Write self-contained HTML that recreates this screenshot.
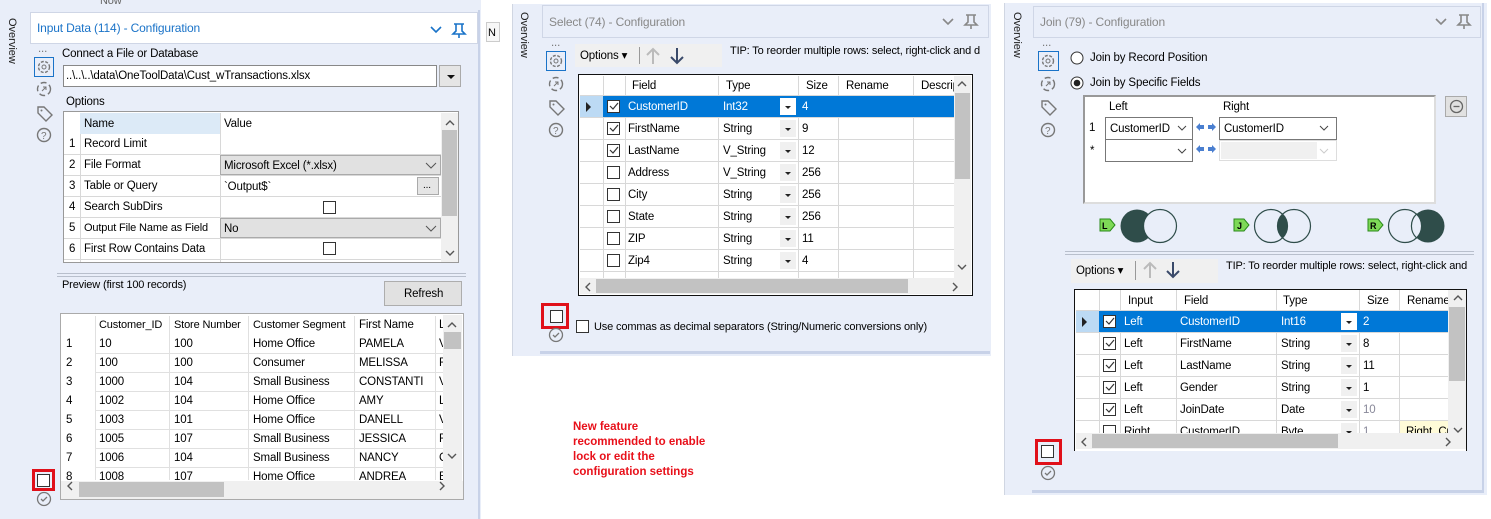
<!DOCTYPE html>
<html><head><meta charset="utf-8">
<style>
*{box-sizing:border-box;margin:0;padding:0}
body{width:1491px;height:519px;background:#fff;position:relative;overflow:hidden;font-family:"Liberation Sans",sans-serif;font-size:11.5px;color:#000}
.a{position:absolute}
.pan{background:#e9eef9}
.hdr{background:#fff;border:1px solid #cfd6e6}
.t{position:absolute;white-space:nowrap;line-height:14px;letter-spacing:-0.15px}
.grid{background:#fff;border:1px solid #a0a0a0}
.hl{position:absolute;height:1px;background:#d8d8d8}
.vl{position:absolute;width:1px;background:#d8d8d8}
.cb{position:absolute;width:13px;height:13px;border:1px solid #333;background:#fff}
.red{position:absolute;border:3px solid #e0101a}
.scr{position:absolute;background:#f0f0f0}
.th{position:absolute;background:#c2c2c2}
.sel{position:absolute;background:#0078d7}
.dd{position:absolute;width:16px;background:#f0f0f0}
.dd:after{content:"";position:absolute;left:5px;top:8px;border-left:3px solid transparent;border-right:3px solid transparent;border-top:3px solid #222}
.ov{position:absolute;writing-mode:vertical-rl;font-size:11px;color:#222}
</style></head><body>

<!-- ============ PANEL 1 ============ -->
<div class="a pan" style="left:0;top:0;width:481px;height:519px"></div>
<div class="t" style="left:100px;top:-6px;color:#666;font-size:11px">Now</div>
<div class="ov" style="left:6px;top:18px">Overview</div>
<div class="a" style="left:28px;top:10px;width:452px;height:509px;border-right:2px solid #c8d2e8"></div>
<div class="a hdr" style="left:30px;top:12px;width:448px;height:32px"></div>
<div class="t" style="left:37px;top:21px;color:#1a73c8;font-size:12px">Input Data (114) - Configuration</div>
<svg class="a" style="left:428px;top:22px" width="40" height="16"><path d="M3 5l5 5 5-5" stroke="#1a73c8" stroke-width="1.6" fill="none"/><path d="M26 2h10M28 2v7l-3 3h12l-3-3V2M31 12v4" stroke="#1a73c8" stroke-width="1.6" fill="none"/></svg>
<div class="t" style="left:38px;top:42px;color:#777">...</div>
<div class="a" style="left:34px;top:57px;width:20px;height:20px;border:1px solid #1a73c8"></div>
<svg class="a" style="left:34px;top:57px" width="22" height="100"><circle cx="10" cy="10" r="5.5" stroke="#777" stroke-width="1.4" fill="none" stroke-dasharray="3 1.5"/><circle cx="10" cy="10" r="2" stroke="#777" fill="none"/><circle cx="10" cy="32" r="6.5" stroke="#777" stroke-width="1.4" fill="none" stroke-dasharray="6 3"/><path d="M8 34l4-4M9 30h3v3" stroke="#777" fill="none"/><path d="M4 50v6l8 8 6-6-8-8z" stroke="#777" stroke-width="1.4" fill="none"/><circle cx="7.5" cy="53.5" r="1" fill="#777"/><circle cx="10" cy="78" r="6.5" stroke="#777" stroke-width="1.4" fill="none"/><text x="7" y="82" font-size="10" fill="#777" font-family="Liberation Sans">?</text></svg>
<div class="t" style="left:62px;top:47px">Connect a File or Database</div>
<div class="a" style="left:63px;top:65px;width:374px;height:22px;background:#fff;border:1px solid #888"></div>
<div class="t" style="left:66px;top:69px">..\..\..\data\OneToolData\Cust_wTransactions.xlsx</div>
<div class="a" style="left:439px;top:65px;width:22px;height:22px;background:#e5e5e5;border:1px solid #aaa"></div>
<div class="a" style="left:447px;top:75px;border-left:4px solid transparent;border-right:4px solid transparent;border-top:4px solid #111"></div>
<div class="t" style="left:66px;top:95px">Options</div>
<div class="a grid" style="left:63px;top:111px;width:396px;height:152px;border-color:#999"></div>
<div class="a" style="left:80px;top:113px;width:140px;height:21px;background:#dceaf7"></div>
<div class="t" style="left:84px;top:117px">Name</div><div class="t" style="left:224px;top:117px">Value</div>
<div class="vl" style="left:80px;top:134px;height:128px"></div>
<div class="vl" style="left:220px;top:113px;height:149px"></div>
<div class="hl" style="left:64px;top:154px;width:377px"></div>
<div class="hl" style="left:64px;top:175px;width:377px"></div>
<div class="hl" style="left:64px;top:196px;width:377px"></div>
<div class="hl" style="left:64px;top:217px;width:377px"></div>
<div class="hl" style="left:64px;top:238px;width:377px"></div>
<div class="hl" style="left:64px;top:259px;width:377px"></div>
<div class="t" style="left:69px;top:137px">1</div><div class="t" style="left:84px;top:137px">Record Limit</div>
<div class="t" style="left:69px;top:158px">2</div><div class="t" style="left:84px;top:158px">File Format</div>
<div class="t" style="left:69px;top:179px">3</div><div class="t" style="left:84px;top:179px">Table or Query</div>
<div class="t" style="left:69px;top:200px">4</div><div class="t" style="left:84px;top:200px">Search SubDirs</div>
<div class="t" style="left:69px;top:221px">5</div><div class="t" style="left:84px;top:221px;font-size:11px">Output File Name as Field</div>
<div class="t" style="left:69px;top:242px">6</div><div class="t" style="left:84px;top:242px">First Row Contains Data</div>
<div class="a" style="left:220px;top:155px;width:221px;height:20px;background:#e1e1e1;border:1px solid #aaa"></div>
<div class="t" style="left:224px;top:159px">Microsoft Excel (*.xlsx)</div>
<div class="a" style="left:220px;top:218px;width:221px;height:20px;background:#e1e1e1;border:1px solid #aaa"></div>
<div class="t" style="left:224px;top:222px">No</div>
<svg class="a" style="left:424px;top:158px" width="14" height="80"><path d="M2 5l5 5 5-5M2 68l5 5 5-5" stroke="#555" fill="none"/></svg>
<div class="t" style="left:224px;top:180px">`Output$`</div>
<div class="a" style="left:417px;top:177px;width:22px;height:18px;background:#e5e5e5;border:1px solid #aaa"></div>
<div class="t" style="left:423px;top:179px;font-size:10px">...</div>
<div class="cb" style="left:323px;top:201px"></div>
<div class="cb" style="left:323px;top:242px"></div>
<div class="scr" style="left:441px;top:113px;width:17px;height:149px"></div>
<div class="th" style="left:442px;top:130px;width:15px;height:86px"></div>
<svg class="a" style="left:443px;top:117px" width="14" height="142"><path d="M3 8l4-4 4 4M3 134l4 4 4-4" stroke="#555" stroke-width="1.4" fill="none"/></svg>
<div class="hl" style="left:57px;top:273px;width:409px;background:#b8bfcc"></div>
<div class="hl" style="left:57px;top:276px;width:409px;background:#b8bfcc"></div>
<div class="t" style="left:62px;top:278px;font-size:11px">Preview (first 100 records)</div>
<div class="a" style="left:384px;top:281px;width:78px;height:25px;background:#e1e1e1;border:1px solid #adadad"></div>
<div class="t" style="left:404px;top:287px">Refresh</div>
<div class="a grid" style="left:60px;top:313px;width:404px;height:187px;border-color:#aaa"></div>
<div class="vl" style="left:95px;top:316px;height:164px;background:#e0e0e0"></div>
<div class="vl" style="left:169px;top:316px;height:164px;background:#e0e0e0"></div>
<div class="vl" style="left:248px;top:316px;height:164px;background:#e0e0e0"></div>
<div class="vl" style="left:354px;top:316px;height:164px;background:#e0e0e0"></div>
<div class="vl" style="left:435px;top:316px;height:164px;background:#e0e0e0"></div>
<div class="hl" style="left:95px;top:353px;width:348px;background:#e0e0e0"></div>
<div class="hl" style="left:95px;top:372px;width:348px;background:#e0e0e0"></div>
<div class="hl" style="left:95px;top:391px;width:348px;background:#e0e0e0"></div>
<div class="hl" style="left:95px;top:410px;width:348px;background:#e0e0e0"></div>
<div class="hl" style="left:95px;top:429px;width:348px;background:#e0e0e0"></div>
<div class="hl" style="left:95px;top:448px;width:348px;background:#e0e0e0"></div>
<div class="hl" style="left:95px;top:467px;width:348px;background:#e0e0e0"></div>
<div class="t" style="left:99px;top:318px;font-size:11px">Customer_ID</div><div class="t" style="left:174px;top:318px;font-size:11px">Store Number</div><div class="t" style="left:253px;top:318px;font-size:11px">Customer Segment</div><div class="t" style="left:359px;top:318px">First Name</div><div class="t" style="left:439px;top:318px">L</div>
<div class="t" style="left:66px;top:337px">1</div><div class="t" style="left:99px;top:337px">10</div><div class="t" style="left:174px;top:337px">100</div><div class="t" style="left:253px;top:337px">Home Office</div><div class="t" style="left:359px;top:337px">PAMELA</div><div class="t" style="left:439px;top:337px">V</div>
<div class="t" style="left:66px;top:356px">2</div><div class="t" style="left:99px;top:356px">100</div><div class="t" style="left:174px;top:356px">100</div><div class="t" style="left:253px;top:356px">Consumer</div><div class="t" style="left:359px;top:356px">MELISSA</div><div class="t" style="left:439px;top:356px">F</div>
<div class="t" style="left:66px;top:375px">3</div><div class="t" style="left:99px;top:375px">1000</div><div class="t" style="left:174px;top:375px">104</div><div class="t" style="left:253px;top:375px">Small Business</div><div class="t" style="left:359px;top:375px">CONSTANTI</div><div class="t" style="left:439px;top:375px">V</div>
<div class="t" style="left:66px;top:394px">4</div><div class="t" style="left:99px;top:394px">1002</div><div class="t" style="left:174px;top:394px">104</div><div class="t" style="left:253px;top:394px">Home Office</div><div class="t" style="left:359px;top:394px">AMY</div><div class="t" style="left:439px;top:394px">L</div>
<div class="t" style="left:66px;top:413px">5</div><div class="t" style="left:99px;top:413px">1003</div><div class="t" style="left:174px;top:413px">101</div><div class="t" style="left:253px;top:413px">Home Office</div><div class="t" style="left:359px;top:413px">DANELL</div><div class="t" style="left:439px;top:413px">V</div>
<div class="t" style="left:66px;top:432px">6</div><div class="t" style="left:99px;top:432px">1005</div><div class="t" style="left:174px;top:432px">107</div><div class="t" style="left:253px;top:432px">Small Business</div><div class="t" style="left:359px;top:432px">JESSICA</div><div class="t" style="left:439px;top:432px">F</div>
<div class="t" style="left:66px;top:451px">7</div><div class="t" style="left:99px;top:451px">1006</div><div class="t" style="left:174px;top:451px">104</div><div class="t" style="left:253px;top:451px">Small Business</div><div class="t" style="left:359px;top:451px">NANCY</div><div class="t" style="left:439px;top:451px">C</div>
<div class="t" style="left:66px;top:470px">8</div><div class="t" style="left:99px;top:470px">1008</div><div class="t" style="left:174px;top:470px">107</div><div class="t" style="left:253px;top:470px">Home Office</div><div class="t" style="left:359px;top:470px">ANDREA</div><div class="t" style="left:439px;top:470px">E</div>
<div class="scr" style="left:443px;top:315px;width:19px;height:166px"></div>
<div class="th" style="left:444px;top:332px;width:17px;height:17px"></div>
<div class="scr" style="left:61px;top:481px;width:402px;height:18px"></div>
<div class="th" style="left:79px;top:482px;width:145px;height:15px"></div>
<svg class="a" style="left:64px;top:318px" width="396" height="180"><path d="M384 9l4-4 4 4M384 136l4 4 4-4M8 164l-4 4 4 4M376 164l4 4-4 4" stroke="#555" stroke-width="1.4" fill="none"/></svg>
<div class="red" style="left:32px;top:469px;width:23px;height:22px"></div>
<div class="cb" style="left:37px;top:474px"></div>
<svg class="a" style="left:36px;top:491px" width="16" height="16"><circle cx="8" cy="8" r="6.5" stroke="#777" stroke-width="1.3" fill="none"/><path d="M5 8l2 2 4-4" stroke="#777" stroke-width="1.3" fill="none"/></svg>
<div class="a" style="left:486px;top:22px;width:14px;height:20px;border:1px solid #ccc;background:#f7f7f7"></div>
<div class="t" style="left:488px;top:26px;font-size:11px">N</div>

<!-- ============ PANEL 2 ============ -->
<div class="a pan" style="left:512px;top:4px;width:479px;height:352px;border-left:1px solid #d0d6e2"></div>
<div class="ov" style="left:518px;top:12px">Overview</div>
<div class="a" style="left:540px;top:4px;width:450px;height:350px;border-bottom:3px solid #c8d2e8"></div>
<div class="a hdr" style="left:542px;top:5px;width:447px;height:33px;background:#e9eef9;border-color:#cfd6e6"></div>
<div class="t" style="left:549px;top:15px;color:#888;font-size:12px">Select (74) - Configuration</div>
<svg class="a" style="left:940px;top:12px" width="40" height="18"><path d="M3 7l5 5 5-5" stroke="#888" stroke-width="1.6" fill="none"/><path d="M26 3h10M28 3v7l-3 3h12l-3-3V3M31 13v4" stroke="#888" stroke-width="1.6" fill="none"/></svg>
<div class="t" style="left:551px;top:36px;color:#777">...</div>
<div class="a" style="left:546px;top:51px;width:20px;height:20px;border:1px solid #1a73c8"></div>
<svg class="a" style="left:546px;top:51px" width="22" height="100"><circle cx="10" cy="10" r="5.5" stroke="#777" stroke-width="1.4" fill="none" stroke-dasharray="3 1.5"/><circle cx="10" cy="10" r="2" stroke="#777" fill="none"/><circle cx="10" cy="33" r="6.5" stroke="#777" stroke-width="1.4" fill="none" stroke-dasharray="6 3"/><path d="M8 35l4-4M9 31h3v3" stroke="#777" fill="none"/><path d="M4 50v6l8 8 6-6-8-8z" stroke="#777" stroke-width="1.4" fill="none"/><circle cx="7.5" cy="53.5" r="1" fill="#777"/><circle cx="10" cy="79" r="6.5" stroke="#777" stroke-width="1.4" fill="none"/><text x="7" y="83" font-size="10" fill="#777" font-family="Liberation Sans">?</text></svg>
<div class="a" style="left:575px;top:44px;width:147px;height:23px;background:#f0f0f0"></div>
<div class="t" style="left:580px;top:49px">Options ▾</div>
<div class="vl" style="left:639px;top:47px;height:17px;background:#999"></div>
<svg class="a" style="left:644px;top:45px" width="44" height="22"><path d="M9 19V4M3 10l6-6 6 6" stroke="#bbb" stroke-width="2" fill="none"/><path d="M33 3v15M27 12l6 6 6-6" stroke="#3a4a6a" stroke-width="2" fill="none"/></svg>
<div class="t" style="left:730px;top:44px;font-size:11px">TIP: To reorder multiple rows: select, right-click and d</div>
<div class="a" style="left:578px;top:74px;width:395px;height:222px;background:#fff;border:1px solid #111"></div>
<div class="vl" style="left:603px;top:76px;height:202px"></div>
<div class="vl" style="left:625px;top:76px;height:202px"></div>
<div class="vl" style="left:718px;top:76px;height:202px"></div>
<div class="vl" style="left:798px;top:76px;height:202px"></div>
<div class="vl" style="left:838px;top:76px;height:202px"></div>
<div class="vl" style="left:913px;top:76px;height:202px"></div>
<div class="hl" style="left:580px;top:95px;width:374px"></div>
<div class="sel" style="left:603px;top:96px;width:351px;height:21px"></div>
<div class="a" style="left:580px;top:96px;width:23px;height:21px;background:#bcdaf4"></div>
<div class="a" style="left:586px;top:102px;border-top:5px solid transparent;border-bottom:5px solid transparent;border-left:5px solid #222"></div>
<div class="hl" style="left:580px;top:117px;width:374px"></div>
<div class="hl" style="left:580px;top:139px;width:374px"></div>
<div class="hl" style="left:580px;top:161px;width:374px"></div>
<div class="hl" style="left:580px;top:183px;width:374px"></div>
<div class="hl" style="left:580px;top:205px;width:374px"></div>
<div class="hl" style="left:580px;top:227px;width:374px"></div>
<div class="hl" style="left:580px;top:249px;width:374px"></div>
<div class="hl" style="left:580px;top:271px;width:374px"></div>
<div class="t" style="left:632px;top:79px">Field</div><div class="t" style="left:726px;top:79px">Type</div><div class="t" style="left:806px;top:79px">Size</div><div class="t" style="left:846px;top:79px">Rename</div><div class="t" style="left:921px;top:79px">Descrip</div>
<div class="dd" style="left:780px;top:98px;height:17px;background:#fff"></div>
<div class="dd" style="left:780px;top:120px;height:17px"></div>
<div class="dd" style="left:780px;top:142px;height:17px"></div>
<div class="dd" style="left:780px;top:164px;height:17px"></div>
<div class="dd" style="left:780px;top:186px;height:17px"></div>
<div class="dd" style="left:780px;top:208px;height:17px"></div>
<div class="dd" style="left:780px;top:230px;height:17px"></div>
<div class="dd" style="left:780px;top:252px;height:17px"></div>
<div class="cb" style="left:607px;top:100px"></div><div class="cb" style="left:607px;top:122px"></div><div class="cb" style="left:607px;top:144px"></div><div class="cb" style="left:607px;top:166px"></div><div class="cb" style="left:607px;top:188px"></div><div class="cb" style="left:607px;top:210px"></div><div class="cb" style="left:607px;top:232px"></div><div class="cb" style="left:607px;top:254px"></div>
<svg class="a" style="left:607px;top:100px" width="14" height="60"><path d="M3 6l3 3 5-6M3 28l3 3 5-6M3 50l3 3 5-6" stroke="#333" stroke-width="1.2" fill="none"/></svg>
<div class="t" style="left:628px;top:100px;color:#fff">CustomerID</div><div class="t" style="left:723px;top:100px;color:#fff">Int32</div><div class="t" style="left:802px;top:100px;color:#fff">4</div>
<div class="t" style="left:628px;top:122px">FirstName</div><div class="t" style="left:723px;top:122px">String</div><div class="t" style="left:802px;top:122px">9</div>
<div class="t" style="left:628px;top:144px">LastName</div><div class="t" style="left:723px;top:144px">V_String</div><div class="t" style="left:802px;top:144px">12</div>
<div class="t" style="left:628px;top:166px">Address</div><div class="t" style="left:723px;top:166px">V_String</div><div class="t" style="left:802px;top:166px">256</div>
<div class="t" style="left:628px;top:188px">City</div><div class="t" style="left:723px;top:188px">String</div><div class="t" style="left:802px;top:188px">256</div>
<div class="t" style="left:628px;top:210px">State</div><div class="t" style="left:723px;top:210px">String</div><div class="t" style="left:802px;top:210px">256</div>
<div class="t" style="left:628px;top:232px">ZIP</div><div class="t" style="left:723px;top:232px">String</div><div class="t" style="left:802px;top:232px">11</div>
<div class="t" style="left:628px;top:254px">Zip4</div><div class="t" style="left:723px;top:254px">String</div><div class="t" style="left:802px;top:254px">4</div>
<div class="scr" style="left:954px;top:76px;width:17px;height:202px"></div>
<div class="th" style="left:955px;top:93px;width:15px;height:86px"></div>
<div class="scr" style="left:580px;top:278px;width:391px;height:16px"></div>
<div class="th" style="left:596px;top:279px;width:312px;height:14px"></div>
<svg class="a" style="left:580px;top:78px" width="392" height="216"><path d="M378 8l4-4 4 4M378 187l4 4 4-4M10 205l-4 4 4 4M373 205l4 4-4 4" stroke="#555" stroke-width="1.4" fill="none"/></svg>
<div class="red" style="left:541px;top:303px;width:28px;height:26px"></div>
<div class="cb" style="left:550px;top:310px"></div>
<svg class="a" style="left:548px;top:327px" width="16" height="16"><circle cx="8" cy="8" r="6.5" stroke="#777" stroke-width="1.3" fill="none"/><path d="M5 8l2 2 4-4" stroke="#777" stroke-width="1.3" fill="none"/></svg>
<div class="cb" style="left:576px;top:320px"></div>
<div class="t" style="left:594px;top:320px;font-size:11px">Use commas as decimal separators (String/Numeric conversions only)</div>

<!-- red note -->
<div class="a" style="left:573px;top:420px;color:#e8101a;font-weight:bold;font-size:11.5px;line-height:15px">New feature<br>recommended to enable<br>lock or edit the<br>configuration settings</div>

<!-- ============ PANEL 3 ============ -->
<div class="a pan" style="left:1004px;top:3px;width:483px;height:492px;border-left:1px solid #d0d6e2"></div>
<div class="ov" style="left:1011px;top:12px">Overview</div>
<div class="a" style="left:1032px;top:3px;width:452px;height:490px;border-right:2px solid #c8d2e8;border-bottom:3px solid #c8d2e8"></div>
<div class="a hdr" style="left:1033px;top:6px;width:448px;height:32px;background:#e9eef9"></div>
<div class="t" style="left:1040px;top:15px;color:#888;font-size:12px">Join (79) - Configuration</div>
<svg class="a" style="left:1433px;top:12px" width="40" height="18"><path d="M3 7l5 5 5-5" stroke="#888" stroke-width="1.6" fill="none"/><path d="M26 3h10M28 3v7l-3 3h12l-3-3V3M31 13v4" stroke="#888" stroke-width="1.6" fill="none"/></svg>
<div class="t" style="left:1042px;top:36px;color:#777">...</div>
<div class="a" style="left:1038px;top:51px;width:21px;height:20px;border:1px solid #1a73c8"></div>
<svg class="a" style="left:1038px;top:51px" width="22" height="100"><circle cx="10" cy="10" r="5.5" stroke="#777" stroke-width="1.4" fill="none" stroke-dasharray="3 1.5"/><circle cx="10" cy="10" r="2" stroke="#777" fill="none"/><circle cx="10" cy="33" r="6.5" stroke="#777" stroke-width="1.4" fill="none" stroke-dasharray="6 3"/><path d="M8 35l4-4M9 31h3v3" stroke="#777" fill="none"/><path d="M4 50v6l8 8 6-6-8-8z" stroke="#777" stroke-width="1.4" fill="none"/><circle cx="7.5" cy="53.5" r="1" fill="#777"/><circle cx="10" cy="79" r="6.5" stroke="#777" stroke-width="1.4" fill="none"/><text x="7" y="83" font-size="10" fill="#777" font-family="Liberation Sans">?</text></svg>
<svg class="a" style="left:1070px;top:50px" width="16" height="42"><circle cx="7" cy="8" r="6" stroke="#333" fill="#fff"/><circle cx="7" cy="33" r="6" stroke="#333" fill="#fff"/><circle cx="7" cy="33" r="3.3" fill="#222"/></svg>
<div class="t" style="left:1090px;top:51px">Join by Record Position</div>
<div class="t" style="left:1090px;top:76px">Join by Specific Fields</div>
<div class="a" style="left:1083px;top:95px;width:353px;height:109px;background:#fff;border:2px solid #999;border-right-color:#ddd;border-bottom-color:#ddd"></div>
<div class="t" style="left:1109px;top:100px">Left</div><div class="t" style="left:1223px;top:100px">Right</div>
<div class="t" style="left:1089px;top:121px">1</div><div class="t" style="left:1090px;top:144px">*</div>
<div class="a" style="left:1105px;top:117px;width:88px;height:23px;border:1px solid #777;background:#fff"></div>
<div class="a" style="left:1105px;top:139px;width:88px;height:23px;border:1px solid #777;background:#fff"></div>
<div class="a" style="left:1219px;top:117px;width:118px;height:23px;border:1px solid #777;background:#fff"></div>
<div class="a" style="left:1219px;top:140px;width:118px;height:21px;border:1px solid #ddd;background:#fff"></div>
<div class="a" style="left:1221px;top:142px;width:96px;height:17px;background:#f0f0f0"></div>
<div class="t" style="left:1110px;top:122px">CustomerID</div><div class="t" style="left:1224px;top:122px">CustomerID</div>
<svg class="a" style="left:1176px;top:123px" width="160" height="32"><path d="M2 3l4 4 4-4M2 26l4 4 4-4" stroke="#444" fill="none"/><path d="M144 3l4 4 4-4" stroke="#444" fill="none"/><path d="M144 26l4 4 4-4" stroke="#ccc" fill="none"/></svg>
<svg class="a" style="left:1195px;top:122px" width="22" height="34"><path d="M1 5l4-4v2h4v4H5v2z M21 5l-4-4v2h-4v4h4v2z M1 27l4-4v2h4v4H5v2z M21 27l-4-4v2h-4v4h4v2z" fill="#4a7fd0"/></svg>
<div class="a" style="left:1445px;top:96px;width:22px;height:21px;background:#e1e1e1;border:1px solid #aaa"></div>
<svg class="a" style="left:1449px;top:99px" width="15" height="15"><circle cx="7.5" cy="7.5" r="6" stroke="#666" stroke-width="1.3" fill="none"/><path d="M4.5 7.5h6" stroke="#666" stroke-width="1.3"/></svg>
<svg class="a" style="left:1098px;top:208px" width="360" height="38">
<g><path d="M2 11h10l5 6-5 6H2z" fill="#7ed957" stroke="#2a8a1a"/><text x="4" y="21" font-size="9" font-weight="bold" font-family="Liberation Sans">L</text>
<circle cx="39" cy="18" r="16.5" fill="#2f4d4a"/><circle cx="62" cy="18" r="16.5" fill="#e9eef9" stroke="#2f4d4a" stroke-width="1.2"/></g>
<g transform="translate(134,0)"><path d="M2 11h10l5 6-5 6H2z" fill="#7ed957" stroke="#2a8a1a"/><text x="5" y="21" font-size="9" font-weight="bold" font-family="Liberation Sans">J</text>
<circle cx="39" cy="18" r="16.5" fill="none" stroke="#2f4d4a" stroke-width="1.2"/><circle cx="62" cy="18" r="16.5" fill="none" stroke="#2f4d4a" stroke-width="1.2"/><path d="M50.5 6.1a16.5 16.5 0 0 1 0 23.8a16.5 16.5 0 0 1 0-23.8z" fill="#2f4d4a"/></g>
<g transform="translate(268,0)"><path d="M2 11h10l5 6-5 6H2z" fill="#7ed957" stroke="#2a8a1a"/><text x="4" y="21" font-size="9" font-weight="bold" font-family="Liberation Sans">R</text>
<circle cx="62" cy="18" r="16.5" fill="#2f4d4a"/><circle cx="39" cy="18" r="16.5" fill="none" stroke="#2f4d4a" stroke-width="1.2"/><path d="M50.5 6.1a16.5 16.5 0 0 1 0 23.8a16.5 16.5 0 0 1 0-23.8z" fill="#e9eef9" stroke="#2f4d4a" stroke-width="1.2"/></g>
</svg>
<div class="hl" style="left:1065px;top:251px;width:409px;background:#b8bfcc"></div>
<div class="hl" style="left:1065px;top:254px;width:409px;background:#b8bfcc"></div>
<div class="a" style="left:1071px;top:259px;width:147px;height:24px;background:#f0f0f0"></div>
<div class="t" style="left:1076px;top:264px">Options ▾</div>
<div class="vl" style="left:1135px;top:261px;height:19px;background:#999"></div>
<svg class="a" style="left:1140px;top:259px" width="44" height="22"><path d="M10 19V4M4 10l6-6 6 6" stroke="#bbb" stroke-width="2" fill="none"/><path d="M33 3v15M27 12l6 6 6-6" stroke="#3a4a6a" stroke-width="2" fill="none"/></svg>
<div class="t" style="left:1226px;top:259px;font-size:11px">TIP: To reorder multiple rows: select, right-click and</div>
<div class="a" style="left:1074px;top:289px;width:393px;height:162px;background:#fff;border:1px solid #111;border-bottom:none"></div>
<div class="vl" style="left:1099px;top:290px;height:143px"></div>
<div class="vl" style="left:1120px;top:290px;height:143px"></div>
<div class="vl" style="left:1176px;top:290px;height:143px"></div>
<div class="vl" style="left:1276px;top:290px;height:143px"></div>
<div class="vl" style="left:1359px;top:290px;height:143px"></div>
<div class="vl" style="left:1399px;top:290px;height:143px"></div>
<div class="hl" style="left:1076px;top:310px;width:372px"></div>
<div class="sel" style="left:1099px;top:311px;width:349px;height:21px"></div>
<div class="a" style="left:1076px;top:311px;width:23px;height:21px;background:#bcdaf4"></div>
<div class="a" style="left:1082px;top:317px;border-top:5px solid transparent;border-bottom:5px solid transparent;border-left:5px solid #222"></div>
<div class="hl" style="left:1076px;top:332px;width:372px"></div>
<div class="hl" style="left:1076px;top:354px;width:372px"></div>
<div class="hl" style="left:1076px;top:376px;width:372px"></div>
<div class="hl" style="left:1076px;top:398px;width:372px"></div>
<div class="hl" style="left:1076px;top:420px;width:372px"></div>
<div class="t" style="left:1128px;top:294px">Input</div><div class="t" style="left:1184px;top:294px">Field</div><div class="t" style="left:1283px;top:294px">Type</div><div class="t" style="left:1367px;top:294px">Size</div><div class="t" style="left:1407px;top:294px">Rename</div>
<div class="dd" style="left:1341px;top:313px;height:17px;background:#fff"></div>
<div class="dd" style="left:1341px;top:335px;height:17px"></div>
<div class="dd" style="left:1341px;top:357px;height:17px"></div>
<div class="dd" style="left:1341px;top:379px;height:17px"></div>
<div class="dd" style="left:1341px;top:401px;height:17px"></div>
<div class="dd" style="left:1341px;top:423px;height:10px"></div>
<div class="cb" style="left:1103px;top:315px"></div><div class="cb" style="left:1103px;top:337px"></div><div class="cb" style="left:1103px;top:359px"></div><div class="cb" style="left:1103px;top:381px"></div><div class="cb" style="left:1103px;top:403px"></div><div class="cb" style="left:1103px;top:425px;height:8px;border-bottom:none"></div>
<svg class="a" style="left:1103px;top:315px" width="14" height="120"><path d="M3 6l3 3 5-6M3 28l3 3 5-6M3 50l3 3 5-6M3 72l3 3 5-6M3 94l3 3 5-6" stroke="#333" stroke-width="1.2" fill="none"/></svg>
<div class="t" style="left:1124px;top:315px;color:#fff">Left</div><div class="t" style="left:1180px;top:315px;color:#fff">CustomerID</div><div class="t" style="left:1281px;top:315px;color:#fff">Int16</div><div class="t" style="left:1363px;top:315px;color:#fff">2</div>
<div class="t" style="left:1124px;top:337px">Left</div><div class="t" style="left:1180px;top:337px">FirstName</div><div class="t" style="left:1281px;top:337px">String</div><div class="t" style="left:1363px;top:337px">8</div>
<div class="t" style="left:1124px;top:359px">Left</div><div class="t" style="left:1180px;top:359px">LastName</div><div class="t" style="left:1281px;top:359px">String</div><div class="t" style="left:1363px;top:359px">11</div>
<div class="t" style="left:1124px;top:381px">Left</div><div class="t" style="left:1180px;top:381px">Gender</div><div class="t" style="left:1281px;top:381px">String</div><div class="t" style="left:1363px;top:381px">1</div>
<div class="t" style="left:1124px;top:403px">Left</div><div class="t" style="left:1180px;top:403px">JoinDate</div><div class="t" style="left:1281px;top:403px">Date</div><div class="t" style="left:1363px;top:403px;color:#889">10</div>
<div class="a" style="left:1400px;top:421px;width:48px;height:12px;background:#fffbd8"></div>
<div class="a" style="left:1076px;top:421px;width:372px;height:12px;overflow:hidden"><div class="t" style="left:48px;top:4px">Right</div><div class="t" style="left:104px;top:4px">CustomerID</div><div class="t" style="left:205px;top:4px">Byte</div><div class="t" style="left:287px;top:4px;color:#889">1</div><div class="t" style="left:330px;top:4px">Right_Cu</div></div>
<div class="scr" style="left:1448px;top:290px;width:18px;height:143px"></div>
<div class="th" style="left:1449px;top:307px;width:16px;height:74px"></div>
<div class="scr" style="left:1076px;top:433px;width:390px;height:16px"></div>
<div class="th" style="left:1092px;top:434px;width:246px;height:14px"></div>
<svg class="a" style="left:1076px;top:292px" width="392" height="158"><path d="M378 8l4-4 4 4M378 136l4 4 4-4M10 146l-4 4 4 4M370 146l4 4-4 4" stroke="#555" stroke-width="1.4" fill="none"/></svg>
<div class="red" style="left:1035px;top:439px;width:27px;height:26px"></div>
<div class="cb" style="left:1041px;top:445px"></div>
<svg class="a" style="left:1040px;top:465px" width="16" height="16"><circle cx="8" cy="8" r="6.5" stroke="#777" stroke-width="1.3" fill="none"/><path d="M5 8l2 2 4-4" stroke="#777" stroke-width="1.3" fill="none"/></svg>
</body></html>
